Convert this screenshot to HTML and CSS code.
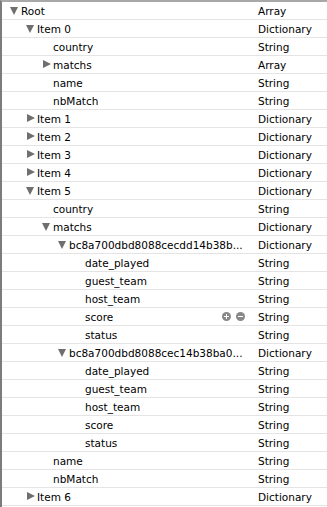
FILE: index.html
```html
<!DOCTYPE html>
<html lang="en">
<head>
    <meta charset="UTF-8">
    <title>Plist outline</title>
    <link rel="stylesheet" href="styles.css">
</head>
<body>
<div class="outline">
    <div class="row"><div class="key lvl-0"><span class="toggle open"></span>Root</div><div class="type">Array</div></div>
    <div class="row"><div class="key lvl-1"><span class="toggle open"></span>Item 0</div><div class="type">Dictionary</div></div>
    <div class="row"><div class="key lvl-2"><span class="toggle"></span>country</div><div class="type">String</div></div>
    <div class="row"><div class="key lvl-2"><span class="toggle closed"></span>matchs</div><div class="type">Array</div></div>
    <div class="row"><div class="key lvl-2"><span class="toggle"></span>name</div><div class="type">String</div></div>
    <div class="row"><div class="key lvl-2"><span class="toggle"></span>nbMatch</div><div class="type">String</div></div>
    <div class="row"><div class="key lvl-1"><span class="toggle closed"></span>Item 1</div><div class="type">Dictionary</div></div>
    <div class="row"><div class="key lvl-1"><span class="toggle closed"></span>Item 2</div><div class="type">Dictionary</div></div>
    <div class="row"><div class="key lvl-1"><span class="toggle closed"></span>Item 3</div><div class="type">Dictionary</div></div>
    <div class="row"><div class="key lvl-1"><span class="toggle closed"></span>Item 4</div><div class="type">Dictionary</div></div>
    <div class="row"><div class="key lvl-1"><span class="toggle open"></span>Item 5</div><div class="type">Dictionary</div></div>
    <div class="row"><div class="key lvl-2"><span class="toggle"></span>country</div><div class="type">String</div></div>
    <div class="row"><div class="key lvl-2"><span class="toggle open"></span>matchs</div><div class="type">Dictionary</div></div>
    <div class="row"><div class="key lvl-3"><span class="toggle open"></span>bc8a700dbd8088cecdd14b38b...</div><div class="type">Dictionary</div></div>
    <div class="row"><div class="key lvl-4"><span class="toggle"></span>date_played</div><div class="type">String</div></div>
    <div class="row"><div class="key lvl-4"><span class="toggle"></span>guest_team</div><div class="type">String</div></div>
    <div class="row"><div class="key lvl-4"><span class="toggle"></span>host_team</div><div class="type">String</div></div>
    <div class="row"><div class="key lvl-4"><span class="toggle"></span>score<span class="actions"><span class="btn plus"></span><span class="btn minus"></span></span></div><div class="type">String</div></div>
    <div class="row"><div class="key lvl-4"><span class="toggle"></span>status</div><div class="type">String</div></div>
    <div class="row"><div class="key lvl-3"><span class="toggle open"></span>bc8a700dbd8088cec14b38ba0...</div><div class="type">Dictionary</div></div>
    <div class="row"><div class="key lvl-4"><span class="toggle"></span>date_played</div><div class="type">String</div></div>
    <div class="row"><div class="key lvl-4"><span class="toggle"></span>guest_team</div><div class="type">String</div></div>
    <div class="row"><div class="key lvl-4"><span class="toggle"></span>host_team</div><div class="type">String</div></div>
    <div class="row"><div class="key lvl-4"><span class="toggle"></span>score</div><div class="type">String</div></div>
    <div class="row"><div class="key lvl-4"><span class="toggle"></span>status</div><div class="type">String</div></div>
    <div class="row"><div class="key lvl-2"><span class="toggle"></span>name</div><div class="type">String</div></div>
    <div class="row"><div class="key lvl-2"><span class="toggle"></span>nbMatch</div><div class="type">String</div></div>
    <div class="row"><div class="key lvl-1"><span class="toggle closed"></span>Item 6</div><div class="type">Dictionary</div></div>
</div>
</body>
</html>
```
FILE: styles.css
```css
*, ::before, ::after {
    box-sizing: border-box;
}

* {
    margin: 0;
}

body {
    background: #fff;
    font-family: "DejaVu Sans", sans-serif;
    font-size: 10.5px;
    color: #000;
}

.outline {
    border-top: 2px solid #a8a8a8;
    border-left: 2px solid #7c7c7c;
    height: 507px;
    overflow: hidden;
}

.row {
    display: flex;
    align-items: center;
    height: 18px;
    border-bottom: 1px solid #e4e4e4;
}

.key {
    display: flex;
    align-items: center;
    width: 255px;
    white-space: nowrap;
}

.lvl-0 { padding-left: 8px; }
.lvl-1 { padding-left: 24px; }
.lvl-2 { padding-left: 40px; }
.lvl-3 { padding-left: 56px; }
.lvl-4 { padding-left: 72px; }

.toggle {
    display: inline-block;
    width: 11px;
    height: 9px;
    flex: none;
    position: relative;
}

.toggle.open::before {
    content: "";
    position: absolute;
    left: 0;
    top: 1px;
    border-left: 4px solid transparent;
    border-right: 4px solid transparent;
    border-top: 8px solid #6f6f6f;
}

.toggle.closed::before {
    content: "";
    position: absolute;
    left: 1px;
    top: 0;
    border-top: 4.5px solid transparent;
    border-bottom: 4.5px solid transparent;
    border-left: 8px solid #6f6f6f;
}

.actions {
    display: flex;
    gap: 5px;
    margin-left: auto;
    margin-right: 12px;
}

.btn {
    width: 9px;
    height: 9px;
    border-radius: 50%;
    background: #888;
    position: relative;
}

.btn::before, .plus::after {
    content: "";
    position: absolute;
    background: #fff;
    left: 2px;
    top: 4px;
    width: 5px;
    height: 1px;
}

.plus::after {
    left: 4px;
    top: 2px;
    width: 1px;
    height: 5px;
}

.type {
    padding-left: 1px;
}
```
